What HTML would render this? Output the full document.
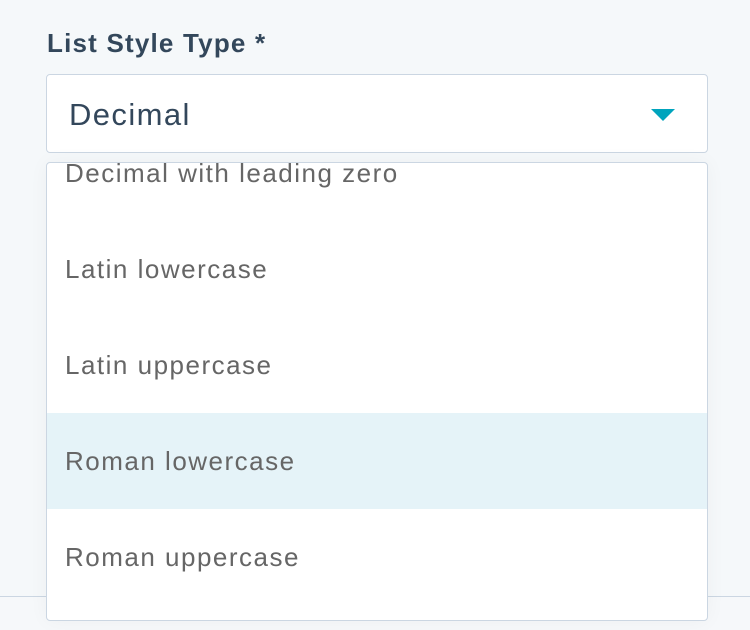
<!DOCTYPE html>
<html><head><style>
html,body{margin:0;padding:0;}
body{width:750px;height:630px;background:#f5f8fa;position:relative;overflow:hidden;font-family:"Liberation Sans",sans-serif;}
.hr{position:absolute;left:0;top:596px;width:750px;height:1px;background:#cbd6e2;}
.bot{position:absolute;left:0;top:597px;width:750px;height:33px;background:#f6f8fa;}
.label{position:absolute;left:47px;top:28px;font-size:26px;font-weight:bold;color:#33475b;letter-spacing:1.2px;}
.sel{position:absolute;left:46px;top:74px;width:660px;height:77px;background:#fff;border:1px solid #cbd6e2;border-radius:4px;}
.sel span{position:absolute;left:22px;top:22px;font-size:31px;color:#33475b;letter-spacing:1.4px;}
.tri{position:absolute;left:604px;top:34px;width:0;height:0;border-left:12px solid transparent;border-right:12px solid transparent;border-top:12px solid #00a4bd;}
.dd{position:absolute;left:46px;top:162px;width:660px;height:457px;background:#fff;border:1px solid #cbd6e2;border-radius:4px;overflow:hidden;box-shadow:0 0 20px rgba(0,0,0,0.04);}
.item{position:absolute;left:0;width:660px;height:96px;line-height:96px;padding-left:18px;box-sizing:border-box;font-size:26px;color:#666;letter-spacing:1.5px;}
.hl{background:#e5f3f8;}
</style></head><body>
<div class="bot"></div><div class="hr"></div>
<div class="label">List Style Type *</div>
<div class="sel"><span>Decimal</span><div class="tri"></div></div>
<div class="dd">
<div class="item" style="top:-38px">Decimal with leading zero</div>
<div class="item" style="top:58px">Latin lowercase</div>
<div class="item" style="top:154px">Latin uppercase</div>
<div class="item hl" style="top:250px">Roman lowercase</div>
<div class="item" style="top:346px">Roman uppercase</div>
</div>
</body></html>
